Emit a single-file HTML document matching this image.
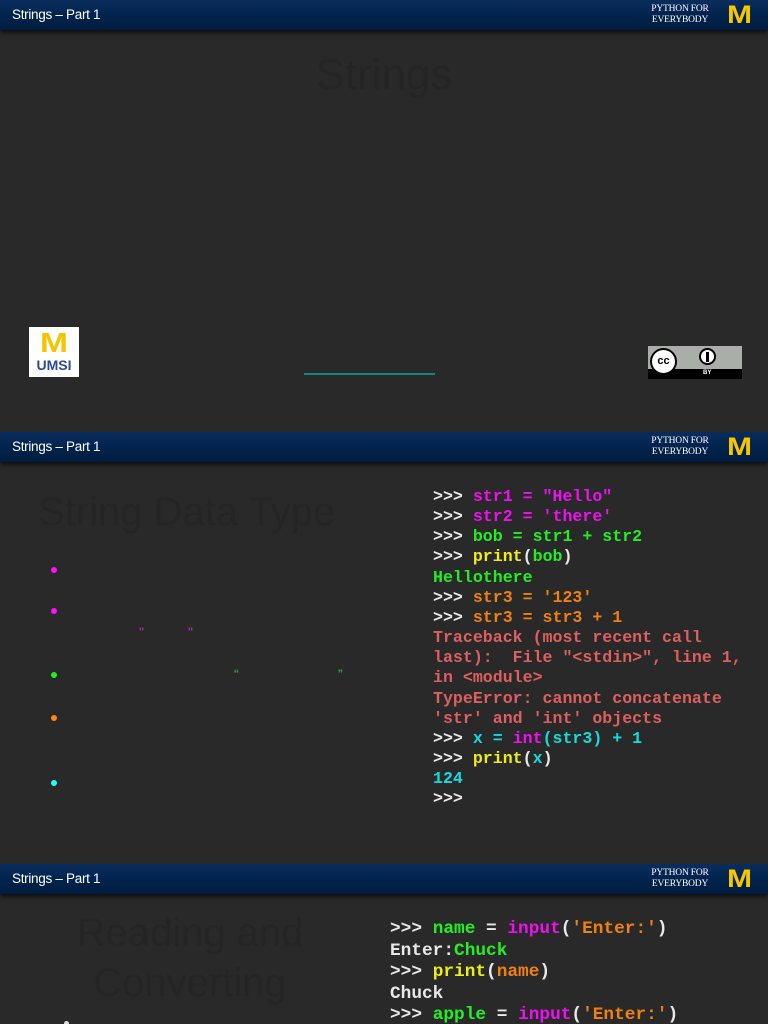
<!DOCTYPE html>
<html><head><meta charset="utf-8"><style>
*{margin:0;padding:0;box-sizing:border-box}
body{width:768px;height:1024px;overflow:hidden;background:#292929;font-family:"Liberation Sans",sans-serif;position:relative}
.slide{position:absolute;left:0;width:768px;height:432px;background:#292929;overflow:hidden}
.hdr{position:absolute;left:0;top:0;width:768px;height:30px;background:linear-gradient(#0a2d5e,#00224a 60%,#001d40);box-shadow:0 3px 4px rgba(0,0,0,.6)}
.hdr .t{position:absolute;left:12px;top:7px;color:#fff;font-size:13.5px;letter-spacing:-.3px}
.hdr .p{position:absolute;left:640px;top:4px;width:80px;color:#fff;font-family:"Liberation Serif",serif;font-size:9.5px;line-height:11px;text-align:center;letter-spacing:-.2px}
.hdr .m{position:absolute;left:727px;top:3px;color:#f6c600;font-family:"Liberation Sans",sans-serif;font-weight:900;font-size:25px;line-height:24px;transform:scaleX(1.2);transform-origin:left}
.ttl{position:absolute;color:#252525;font-size:44px;text-align:center}
.code{position:absolute;font-family:"Liberation Mono",monospace;font-weight:bold;white-space:pre;color:#e8e8e8}
.w{color:#e8e8e8}.mg{color:#ee11ee}.g{color:#22ee22}.y{color:#eeee11}.o{color:#f08010}.r{color:#dd5f5f}.c{color:#11dddd}
.dot{position:absolute;width:6px;height:6px;border-radius:3px;left:51px}
</style></head><body>

<div class="slide" style="top:0">
<div class="hdr"><div class="t">Strings – Part 1</div><div class="p">PYTHON FOR<br>EVERYBODY</div><div class="m">M</div></div>
<div class="ttl" style="left:0;width:768px;top:50px">Strings</div>
<div style="position:absolute;left:29px;top:327px;width:50px;height:50px;background:#fff;">
<div style="position:absolute;left:0;top:1px;width:50px;text-align:center;color:#f2c500;font-family:'Liberation Sans',sans-serif;font-weight:900;font-size:28px;line-height:30px;transform:scaleX(1.2)">M</div>
<div style="position:absolute;left:0;top:30px;width:50px;text-align:center;color:#2c4a9a;font-weight:bold;font-size:14px;">UMSI</div></div>
<div style="position:absolute;left:304px;top:373px;width:131px;height:2px;background:#1a8580"></div>
<div style="position:absolute;left:648px;top:346px;width:94px;height:33px;background:#a9afa8">
<div style="position:absolute;left:0;top:23px;width:94px;height:10px;background:#000"></div>
<div style="position:absolute;left:2px;top:2px;width:27px;height:27px;border-radius:50%;background:#fff;border:2px solid #000;font-weight:bold;font-size:11px;line-height:23px;text-align:center">cc</div>
<div style="position:absolute;left:51px;top:2px;width:17px;height:17px;border-radius:50%;background:#fff;border:2px solid #000"><div style="position:absolute;left:5px;top:2px;width:3px;height:10px;background:#000"></div></div>
<div style="position:absolute;left:55px;top:24px;color:#fff;font-size:6px;font-weight:bold">BY</div></div>
</div>

<div class="slide" style="top:432px">
<div class="hdr"><div class="t">Strings – Part 1</div><div class="p">PYTHON FOR<br>EVERYBODY</div><div class="m">M</div></div>
<div class="ttl" style="left:38px;top:58px;font-size:40px">String Data Type</div>
<div class="dot" style="top:135px;background:#ff11ff"></div>
<div class="dot" style="top:176px;background:#ff11ff"></div>
<div class="dot" style="top:240px;background:#22ee22"></div>
<div class="dot" style="top:283px;background:#ff8811"></div>
<div class="dot" style="top:348px;background:#22ffff"></div>
<div style="position:absolute;left:139px;top:192px;color:#cc22cc;font-size:14px">"</div>
<div style="position:absolute;left:188px;top:192px;color:#cc22cc;font-size:14px">"</div>
<div style="position:absolute;left:234px;top:234px;color:#22cc22;font-size:14px">“</div>
<div style="position:absolute;left:338px;top:234px;color:#22cc22;font-size:14px">”</div>
<div class="code" style="left:433px;top:55px;font-size:16.6px;line-height:20.15px"><span class="w">&gt;&gt;&gt; </span><span class="mg">str1 = "Hello"</span>
<span class="w">&gt;&gt;&gt; </span><span class="mg">str2 = 'there'</span>
<span class="w">&gt;&gt;&gt; </span><span class="g">bob = str1 + str2</span>
<span class="w">&gt;&gt;&gt; </span><span class="y">print</span><span class="w">(</span><span class="g">bob</span><span class="w">)</span>
<span class="g">Hellothere</span>
<span class="w">&gt;&gt;&gt; </span><span class="o">str3 = '123'</span>
<span class="w">&gt;&gt;&gt; </span><span class="o">str3 = str3 + 1</span>
<span class="r">Traceback (most recent call</span>
<span class="r">last):  File "&lt;stdin&gt;", line 1,</span>
<span class="r">in &lt;module&gt;</span>
<span class="r">TypeError: cannot concatenate</span>
<span class="r">'str' and 'int' objects</span>
<span class="w">&gt;&gt;&gt; </span><span class="c">x = </span><span class="mg">int</span><span class="c">(str3) + 1</span>
<span class="w">&gt;&gt;&gt; </span><span class="y">print</span><span class="w">(</span><span class="c">x</span><span class="w">)</span>
<span class="c">124</span>
<span class="w">&gt;&gt;&gt;</span></div>
</div>

<div class="slide" style="top:864px;height:160px">
<div class="hdr"><div class="t">Strings – Part 1</div><div class="p">PYTHON FOR<br>EVERYBODY</div><div class="m">M</div></div>
<div class="ttl" style="left:40px;width:300px;top:44px;font-size:40px;line-height:50px">Reading and<br>Converting</div>
<div style="position:absolute;left:64px;top:157px;width:5px;height:5px;border-radius:3px;background:#ddd"></div>
<div class="code" style="left:390px;top:55px;font-size:17.8px;line-height:21.6px"><span class="w">&gt;&gt;&gt; </span><span class="g">name</span><span class="w"> = </span><span class="mg">input</span><span class="w">(</span><span class="o">'Enter:'</span><span class="w">)</span>
<span class="w">Enter:</span><span class="g">Chuck</span>
<span class="w">&gt;&gt;&gt; </span><span class="y">print</span><span class="w">(</span><span class="o">name</span><span class="w">)</span>
<span class="w">Chuck</span>
<span class="w">&gt;&gt;&gt; </span><span class="g">apple</span><span class="w"> = </span><span class="mg">input</span><span class="w">(</span><span class="o">'Enter:'</span><span class="w">)</span></div>
</div>
</body></html>
